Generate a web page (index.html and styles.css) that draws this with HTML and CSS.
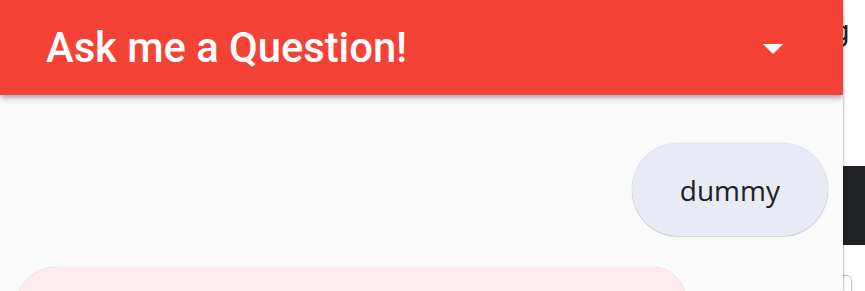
FILE: index.html
```html
<!DOCTYPE html>
<html>
<head>
<meta charset="utf-8">
<link rel="stylesheet" href="styles.css">
</head>
<body>
  <main class="panel">
    <header class="header">
      <h1 class="title">Ask me a Question!</h1>
      <svg class="dropdown" viewBox="0 0 24 24" width="48" height="48"><path d="M7 10l5 5 5-5z" fill="#fff"/></svg>
    </header>
    <section class="messages">
      <div class="bubble user">dummy</div>
      <div class="bubble bot"></div>
    </section>
  </main>
  <aside class="side">
    <div class="peek-text">ng</div>
    <div class="dark-block"></div>
    <div class="peek-box"></div>
  </aside>
</body>
</html>
```
FILE: styles.css
```css
html, body {
  margin: 0;
  padding: 0;
}
body {
  width: 865px;
  height: 291px;
  overflow: hidden;
  display: flex;
  background: #ffffff;
  font-family: "Open Sans", "Noto Sans", sans-serif;
}
.panel {
  width: 843px;
  height: 291px;
  flex: none;
  overflow: hidden;
  background: #fafafa;
  display: flex;
  flex-direction: column;
  position: relative;
  z-index: 2;
  box-shadow: 1px 0 2px rgba(0,0,0,0.25);
}
.header {
  height: 95px;
  flex: none;
  background: #f44336;
  display: flex;
  align-items: center;
  justify-content: space-between;
  padding: 0 46px 0 46px;
  box-sizing: border-box;
  box-shadow: 0 2px 4px -1px rgba(0,0,0,0.2), 0 4px 5px 0 rgba(0,0,0,0.14), 0 1px 10px 0 rgba(0,0,0,0.12);
  position: relative;
  z-index: 1;
}
.title {
  margin: 0;
  font-family: Roboto, "Liberation Sans", sans-serif;
  font-weight: 500;
  font-size: 41.7px;
  line-height: 48px;
  color: #ffffff;
}
.dropdown {
  display: block;
  flex: none;
}
.messages {
  display: flex;
  flex-direction: column;
  padding: 48px 15px 0 15px;
}
.bubble {
  box-sizing: border-box;
  flex: none;
}
.bubble.user {
  align-self: flex-end;
  height: 93px;
  padding: 0 48px;
  display: flex;
  align-items: center;
  border-radius: 47px;
  background: #e8eaf6;
  color: #212121;
  font-size: 28px;
  box-shadow: 0 1px 1px rgba(0,0,0,0.14), 0 0 1px rgba(0,0,0,0.25);
}
.bubble.bot {
  margin-top: 31px;
  width: 671px;
  height: 100px;
  border-radius: 42px 34px 42px 42px;
  background: #ffebee;
  box-shadow: 0 0 1px rgba(0,0,0,0.25);
}
.side {
  width: 22px;
  height: 291px;
  flex: none;
  overflow: hidden;
  display: flex;
  flex-direction: column;
  position: relative;
  z-index: 1;
}
.side > div {
  flex: none;
}
.peek-text {
  margin-top: 14px;
  margin-left: -26px;
  font-family: Roboto, "Liberation Sans", sans-serif;
  font-size: 29px;
  line-height: 34px;
  height: 34px;
  color: #202124;
  white-space: nowrap;
}
.dark-block {
  margin-top: 118px;
  height: 79px;
  background: #202124;
}
.peek-box {
  margin-top: 30px;
  margin-left: -20px;
  width: 29px;
  height: 40px;
  border: 1px solid #c4c4c4;
  border-radius: 5px;
  box-sizing: border-box;
}
```
